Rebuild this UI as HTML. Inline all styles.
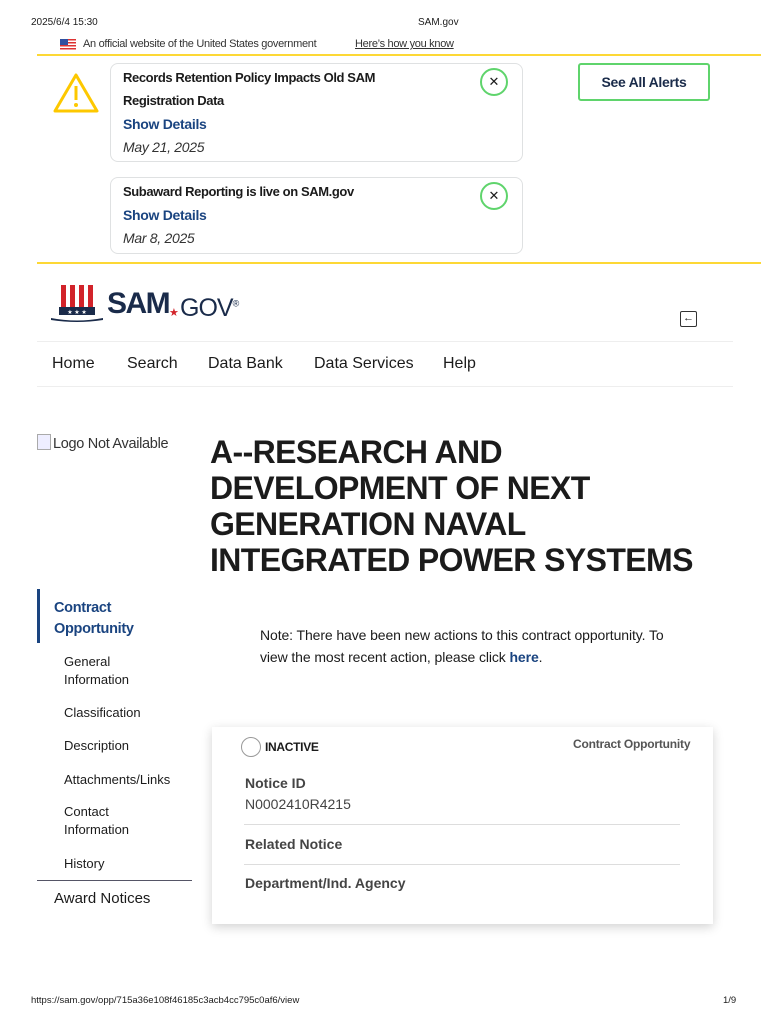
<!DOCTYPE html>
<html><head><meta charset="utf-8"><style>
*{margin:0;padding:0;box-sizing:border-box}
body{width:768px;height:1024px;position:relative;background:#fff;font-family:"Liberation Sans",sans-serif;color:#1b1b1b;overflow:hidden}
.a{position:absolute;white-space:nowrap}
.card{position:absolute;border:1px solid #dfe1e2;border-radius:8px;background:#fff}
.x{position:absolute;width:28px;height:28px;border:2px solid #5fd46c;border-radius:50%;font-size:13px;text-align:center;line-height:24px;color:#1b1b1b}
.sd{color:#1a4480;font-size:14px;font-weight:bold;letter-spacing:-.3px}
.dt{font-style:italic;font-size:14px;color:#333;letter-spacing:-.3px}
.t{font-size:13px;font-weight:bold;letter-spacing:-.4px}
.nav{font-size:16px;color:#1b1b1b;top:355px}
.side{font-size:13px;color:#1b1b1b;left:64px;line-height:18px}
</style></head><body>
<div class="a" style="left:31px;top:17px;font-size:10px">2025/6/4 15:30</div>
<div class="a" style="left:418px;top:17px;font-size:10px">SAM.gov</div>
<div class="a" style="left:60px;top:39px;width:16px;height:11px;background:repeating-linear-gradient(#d33 0 1.5px,#fff 1.5px 3px)"><div style="width:8px;height:6px;background:#3050a0"></div></div>
<div class="a" style="left:83px;top:38px;font-size:11px;color:#333;letter-spacing:-.3px">An official website of the United States government</div>
<div class="a" style="left:355px;top:38px;font-size:11px;color:#333;text-decoration:underline;letter-spacing:-.3px">Here’s how you know</div>
<div class="a" style="left:37px;top:54px;width:724px;height:2px;background:#fdd835"></div>
<svg class="a" style="left:52px;top:72px" width="48" height="42" viewBox="0 0 48 42"><path d="M24 3 L45 39 H3 Z" fill="none" stroke="#fdc800" stroke-width="3" stroke-linejoin="round"/><rect x="22.5" y="14" width="3" height="14" fill="#fdc800"/><circle cx="24" cy="33" r="2" fill="#fdc800"/></svg>
<div class="card" style="left:110px;top:63px;width:413px;height:99px"></div>
<div class="a t" style="left:123px;top:70px">Records Retention Policy Impacts Old SAM</div>
<div class="a t" style="left:123px;top:93px">Registration Data</div>
<div class="a sd" style="left:123px;top:116px">Show Details</div>
<div class="a dt" style="left:123px;top:139px">May 21, 2025</div>
<div class="x" style="left:480px;top:68px">✕</div>
<div class="card" style="left:110px;top:177px;width:413px;height:77px"></div>
<div class="a t" style="left:123px;top:184px">Subaward Reporting is live on SAM.gov</div>
<div class="a sd" style="left:123px;top:207px">Show Details</div>
<div class="a dt" style="left:123px;top:230px">Mar 8, 2025</div>
<div class="x" style="left:480px;top:182px">✕</div>
<div class="a" style="left:578px;top:63px;width:132px;height:38px;border:2px solid #5fd46c;border-radius:3px;text-align:center;line-height:34px;color:#1a2b4a;font-weight:bold;font-size:14px;letter-spacing:-.3px">See All Alerts</div>
<div class="a" style="left:37px;top:262px;width:724px;height:2px;background:#fdd835"></div>
<svg class="a" style="left:50px;top:283px" width="54" height="40" viewBox="0 0 54 40"><rect x="11" y="2" width="5" height="22" fill="#d2232a"/><rect x="20" y="2" width="5" height="22" fill="#d2232a"/><rect x="29" y="2" width="5" height="22" fill="#d2232a"/><rect x="38" y="2" width="5" height="22" fill="#d2232a"/><path d="M9 24 H45 V32 H9Z" fill="#1a2b4a"/><path d="M1 35 Q27 40 53 35 V37 Q27 41 1 37Z" fill="#1a2b4a"/><text x="27" y="31" font-size="6" fill="#fff" text-anchor="middle">★ ★ ★</text></svg>
<div class="a" style="left:107px;top:287px;font-size:30px;font-weight:bold;color:#1a2b4a;letter-spacing:-1.5px">SAM</div>
<div class="a" style="left:169px;top:306px;font-size:11px;color:#d2232a">★</div>
<div class="a" style="left:180px;top:294px;font-size:25px;color:#1a2b4a;letter-spacing:-1px">GOV<sup style="font-size:9px">®</sup></div>
<div class="a" style="left:680px;top:311px;width:17px;height:16px;border:1px solid #333;border-radius:2px;font-size:11px;text-align:center;line-height:13px">←</div>
<div class="a" style="left:37px;top:341px;width:696px;height:1px;background:#eee"></div>
<div class="a nav" style="left:52px">Home</div>
<div class="a nav" style="left:127px">Search</div>
<div class="a nav" style="left:208px">Data Bank</div>
<div class="a nav" style="left:314px">Data Services</div>
<div class="a nav" style="left:443px">Help</div>
<div class="a" style="left:37px;top:386px;width:696px;height:1px;background:#eee"></div>
<div class="a" style="left:37px;top:434px;width:14px;height:16px;border:1px solid #aaa;background:#eef"></div>
<div class="a" style="left:53px;top:436px;font-size:14.5px;color:#333;letter-spacing:-.3px">Logo Not Available</div>
<div class="a" style="left:210px;top:434px;font-size:32px;font-weight:bold;line-height:36px;letter-spacing:-.6px;color:#1b1b1b;white-space:normal;width:540px">A--RESEARCH AND<br>DEVELOPMENT OF NEXT<br>GENERATION NAVAL<br>INTEGRATED POWER SYSTEMS</div>
<div class="a" style="left:37px;top:589px;width:3px;height:54px;background:#1a4480"></div>
<div class="a" style="left:54px;top:598px;font-size:14.5px;color:#1a4480;font-weight:bold;line-height:21px;letter-spacing:-.3px">Contract<br>Opportunity</div>
<div class="a side" style="top:653px">General<br>Information</div>
<div class="a side" style="top:704px">Classification</div>
<div class="a side" style="top:737px">Description</div>
<div class="a side" style="top:771px">Attachments/Links</div>
<div class="a side" style="top:803px">Contact<br>Information</div>
<div class="a side" style="top:855px">History</div>
<div class="a" style="left:37px;top:880px;width:155px;height:1px;background:#556"></div>
<div class="a" style="left:54px;top:890px;font-size:15px;color:#1b1b1b">Award Notices</div>
<div class="a" style="left:260px;top:624px;font-size:14px;line-height:22px;color:#1b1b1b;letter-spacing:-.1px">Note: There have been new actions to this contract opportunity. To<br>view the most recent action, please click <b style="color:#1a4480">here</b>.</div>
<div class="a" style="left:212px;top:727px;width:501px;height:197px;background:#fff;box-shadow:0 3px 10px rgba(0,0,0,.18)"></div>
<div class="a" style="left:241px;top:737px;width:20px;height:20px;border:1.5px solid #999;border-radius:50%"></div>
<div class="a" style="left:265px;top:740px;font-size:12px;font-weight:bold;letter-spacing:-.3px">INACTIVE</div>
<div class="a" style="left:573px;top:737px;font-size:12px;color:#555;font-weight:bold;letter-spacing:-.2px">Contract Opportunity</div>
<div class="a" style="left:245px;top:775px;font-size:14px;font-weight:bold;color:#444">Notice ID</div>
<div class="a" style="left:245px;top:796px;font-size:14px;color:#444">N0002410R4215</div>
<div class="a" style="left:244px;top:824px;width:436px;height:1px;background:#ddd"></div>
<div class="a" style="left:245px;top:836px;font-size:14px;font-weight:bold;color:#444">Related Notice</div>
<div class="a" style="left:244px;top:864px;width:436px;height:1px;background:#ddd"></div>
<div class="a" style="left:245px;top:875px;font-size:14px;font-weight:bold;color:#444">Department/Ind. Agency</div>
<div class="a" style="left:31px;top:995px;font-size:9.5px">https://sam.gov/opp/715a36e108f46185c3acb4cc795c0af6/view</div>
<div class="a" style="left:723px;top:995px;font-size:9.5px">1/9</div>
</body></html>
